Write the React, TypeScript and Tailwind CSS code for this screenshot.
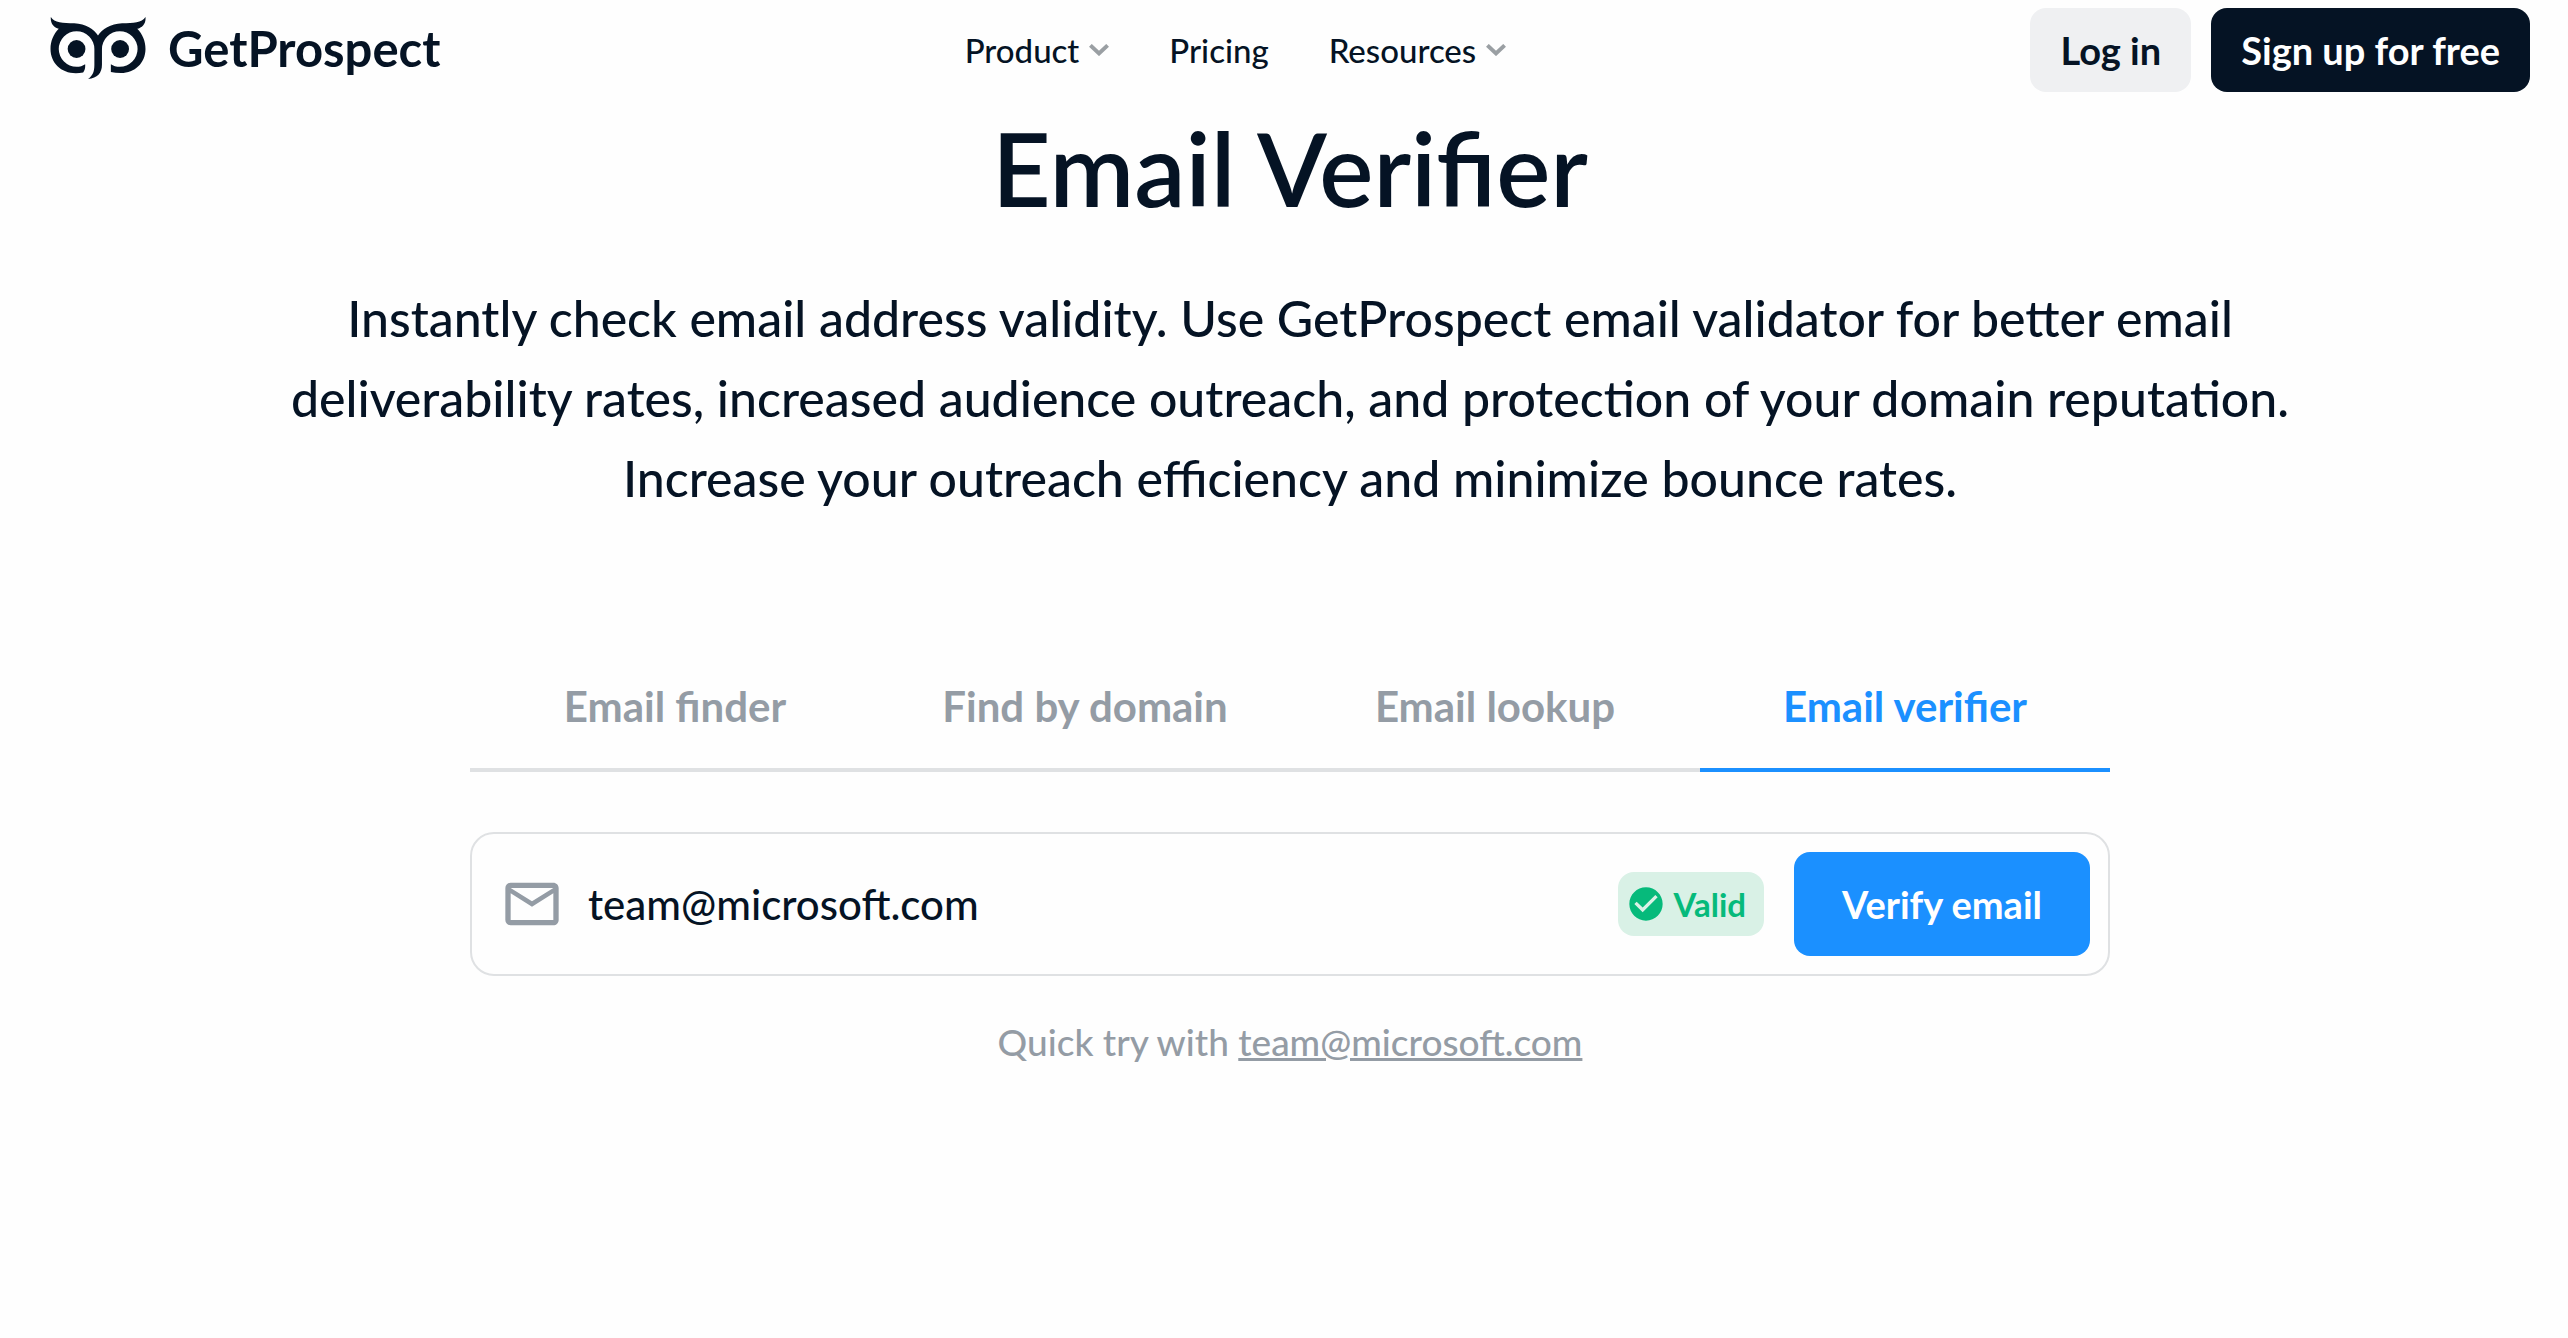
import { useState } from "react";
import { MdCheckCircle, MdMailOutline } from "react-icons/md";

const navItems = [
  { label: "Product", hasMenu: true },
  { label: "Pricing", hasMenu: false },
  { label: "Resources", hasMenu: true },
];

const tabs = ["Email finder", "Find by domain", "Email lookup", "Email verifier"];

const sampleEmail = "team@microsoft.com";

function Logo() {
  return (
    <svg viewBox="18 20 288 188" className="h-[62px] w-24 shrink-0" fill="currentColor" aria-hidden="true">
      <path d="M19 20C30 38 55 39 90 39C125 40 150 58 162 76C174 58 200 40 235 39C270 39 294 38 306 20C308 40 296 52 281 56C297 72 306 94 306 117C306 160 273 190 232 190Q214 190 201 187L201 163C208 168 218 171 228 171A54 54 0 1 0 174 117L174 165C174 190 160 206 132 208C146 198 151 186 151 165L151 117A54 54 0 1 0 97 171C107 171 116 168 123 163C124 172 122 182 117 188C60 200 18 165 18 117C18 94 27 72 43 56C28 52 17 40 19 20Z" />
      <circle cx="97" cy="117" r="27" />
      <circle cx="229" cy="117" r="27" />
    </svg>
  );
}

function Chevron() {
  return (
    <svg viewBox="0 0 20 12" className="h-3 w-5 text-[#9a9fa3]" fill="none" stroke="currentColor" strokeWidth="4" aria-hidden="true">
      <path d="M1.4 1.4L10 9.4L18.6 1.4" />
    </svg>
  );
}

export default function App() {
  const [activeTab, setActiveTab] = useState("Email verifier");
  const [email, setEmail] = useState(sampleEmail);

  return (
    <div className="min-h-screen bg-[#fefefe] font-['Lato','Liberation_Sans',sans-serif] text-[#051324]">
      {/* Header */}
      <header className="flex items-center justify-between py-2 pl-[50px] pr-[38px]">
        <a href="#" className="flex items-center gap-[22px] pb-1 text-[49px] leading-[60px] font-bold">
          <Logo />
          GetProspect
        </a>

        <nav className="flex items-center gap-[60px] text-[33px] leading-10 font-medium">
          {navItems.map((item) => (
            <a key={item.label} href="#" className="flex items-center gap-2.5">
              {item.label}
              {item.hasMenu && <Chevron />}
            </a>
          ))}
        </nav>

        <div className="flex items-center gap-5 text-[38px] leading-[48px] font-bold">
          <button className="rounded-2xl bg-[#eff0f2] px-[30px] py-[18px]">Log in</button>
          <button className="rounded-2xl bg-[#051324] px-[30px] py-[18px] text-white">Sign up for free</button>
        </div>
      </header>

      <main className="flex flex-col items-center pt-2.5 pl-3">
        <h1 className="text-[102px] leading-[116px] font-semibold">Email Verifier</h1>
        <p className="mt-[52px] max-w-[2080px] text-center text-[50px] leading-[80px] font-medium">
          Instantly check email address validity. Use GetProspect email validator for better email
          deliverability rates, increased audience outreach, and protection of your domain reputation.
          Increase your outreach efficiency and minimize bounce rates.
        </p>

        <section className="mt-[124px] w-full max-w-[1640px]">
          {/* Tabs */}
          <div role="tablist" className="grid grid-cols-4">
            {tabs.map((tab) => (
              <button
                key={tab}
                role="tab"
                aria-selected={tab === activeTab}
                onClick={() => setActiveTab(tab)}
                className={`border-b-4 pt-9 pb-[34px] text-[42px] leading-[56px] font-bold ${
                  tab === activeTab ? "border-[#1b90ff] text-[#1b90ff]" : "border-[#dfe1e3] text-[#949ca5]"
                }`}
              >
                {tab}
              </button>
            ))}
          </div>

          {/* Email form */}
          <form
            onSubmit={(e) => e.preventDefault()}
            className="mt-[60px] flex items-center rounded-3xl border-2 border-[#dfe1e3] py-[18px] pl-7 pr-[18px]"
          >
            <MdMailOutline className="size-16 shrink-0 text-[#949ca5]" />
            <input
              type="email"
              aria-label="Email address"
              value={email}
              onChange={(e) => setEmail(e.target.value)}
              className="ml-6 min-w-0 flex-1 bg-transparent text-[42px] leading-[56px] font-medium outline-none"
            />
            <span className="flex items-center gap-2 rounded-2xl bg-[#d9f1e6] py-2.5 pl-2 pr-[18px] text-[33px] leading-[44px] font-bold text-[#06ba7b]">
              <MdCheckCircle className="size-10" />
              Valid
            </span>
            <button className="ml-[30px] rounded-2xl bg-[#1b90ff] px-12 py-7 text-[38px] leading-[48px] font-bold text-white">
              Verify email
            </button>
          </form>

          <p className="mt-[42px] text-center text-[37px] leading-[48px] font-medium text-[#949ca5]">
            Quick try with{" "}
            <a href="#" onClick={() => setEmail(sampleEmail)} className="underline">
              {sampleEmail}
            </a>
          </p>
        </section>
      </main>
    </div>
  );
}
